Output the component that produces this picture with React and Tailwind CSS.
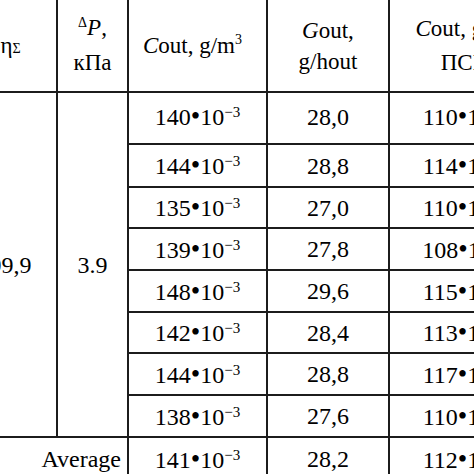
import React from "react";

const rows = [
  ["140", "28,0", "110"],
  ["144", "28,8", "114"],
  ["135", "27,0", "110"],
  ["139", "27,8", "108"],
  ["148", "29,6", "115"],
  ["142", "28,4", "113"],
  ["144", "28,8", "117"],
  ["138", "27,6", "110"],
];

function Sci({ n }) {
  return (
    <span className="whitespace-nowrap">
      {n}
      <span className="text-[27px] leading-none">•</span>
      10
      <span className="text-[15px] relative top-[-8px]">−3</span>
    </span>
  );
}

const cell =
  "border-r-2 border-b-2 border-[#1c1c1c] flex items-center justify-center";

export default function App() {
  return (
    <div className="w-[474px] h-[474px] overflow-hidden bg-white text-black font-[family-name:'Liberation_Serif',serif]">
      <div className="ml-[-35px] w-max grid grid-cols-[93px_71px_139px_122px_152px] grid-rows-[93px_52px_43px_41px_42px_42px_41px_42px_42px_44px] text-[24px] leading-none">
        {/* header */}
        <div className={cell + " text-[23px]"}>
          <span>
            η<span className="text-[14px]">Σ</span>
          </span>
        </div>
        <div className={cell + " text-[23px] flex-col leading-[32px]"}>
          <span>
            <span className="text-[14px] relative top-[-8px]">Δ</span>
            <i>P</i>,
          </span>
          <span>кПа</span>
        </div>
        <div className={cell + " text-[23px] pr-[10px]"}>
          <span>
            <i>C</i>out, g/m<span className="text-[14px] relative top-[-9px]">3</span>
          </span>
        </div>
        <div className={cell + " text-[23px] flex-col leading-[31px]"}>
          <span>
            <i>G</i>out,
          </span>
          <span>g/hout</span>
        </div>
        <div className={cell + " text-[23px] flex-col leading-[31px]"}>
          <span>
            <i>C</i>out, g/m<span className="text-[14px] relative top-[-9px]">3</span>
          </span>
          <span>ПСП</span>
        </div>

        {/* spanning cells */}
        <div className={cell + " col-start-1 row-start-2 row-span-8"}>99,9</div>
        <div className={cell + " col-start-2 row-start-2 row-span-8"}>3.9</div>

        {rows.map((r, i) => (
          <React.Fragment key={i}>
            <div className={cell + (i === 0 ? " pb-[3px]" : "")}>
              <Sci n={r[0]} />
            </div>
            <div className={cell + (i === 0 ? " pb-[3px]" : "")}>{r[1]}</div>
            <div className={cell + (i === 0 ? " pb-[3px]" : "")}>
              <Sci n={r[2]} />
            </div>
          </React.Fragment>
        ))}

        {/* average */}
        <div className="col-span-2 border-r-2 border-b-2 border-[#1c1c1c] flex items-center justify-end pr-[6px]">
          Average
        </div>
        <div className={cell}>
          <Sci n="141" />
        </div>
        <div className={cell}>28,2</div>
        <div className={cell}>
          <Sci n="112" />
        </div>
      </div>
    </div>
  );
}
